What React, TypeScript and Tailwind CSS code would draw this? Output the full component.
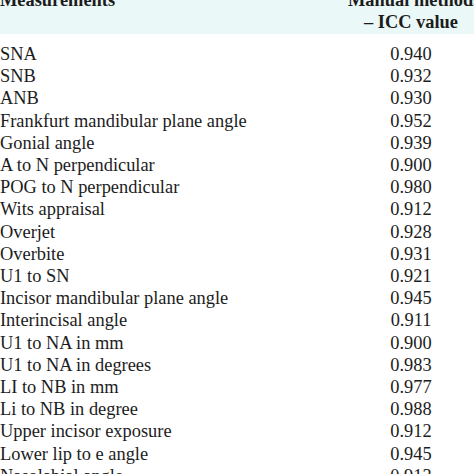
import React from 'react';

const rows: [string, string][] = [
  ['SNA', '0.940'],
  ['SNB', '0.932'],
  ['ANB', '0.930'],
  ['Frankfurt mandibular plane angle', '0.952'],
  ['Gonial angle', '0.939'],
  ['A to N perpendicular', '0.900'],
  ['POG to N perpendicular', '0.980'],
  ['Wits appraisal', '0.912'],
  ['Overjet', '0.928'],
  ['Overbite', '0.931'],
  ['U1 to SN', '0.921'],
  ['Incisor mandibular plane angle', '0.945'],
  ['Interincisal angle', '0.911'],
  ['U1 to NA in mm', '0.900'],
  ['U1 to NA in degrees', '0.983'],
  ['LI to NB in mm', '0.977'],
  ['Li to NB in degree', '0.988'],
  ['Upper incisor exposure', '0.912'],
  ['Lower lip to e angle', '0.945'],
  ['Nasolabial angle', '0.913'],
];

export default function App() {
  return (
    <div
      className="w-[474px] h-[474px] overflow-hidden bg-white text-[#1c1c1c] text-[18.4px]"
      style={{ fontFamily: '"Liberation Serif", "Times New Roman", serif' }}
    >
      {/* header */}
      <div className="bg-[#ebf8f8] mt-[-11px] pb-[1px] flex font-bold leading-[22px]">
        <div className="flex-1 whitespace-nowrap">Measurements</div>
        <div className="w-[126px] text-center whitespace-nowrap">
          <div>Manual methods</div>
          <div>– ICC value</div>
        </div>
      </div>

      {/* rows */}
      <div className="pt-[9px] leading-[22.2px]">
        {rows.map(([name, value]) => (
          <div key={name} className="flex">
            <div className="flex-1 whitespace-nowrap">{name}</div>
            <div className="w-[126px] text-center">{value}</div>
          </div>
        ))}
      </div>
    </div>
  );
}
